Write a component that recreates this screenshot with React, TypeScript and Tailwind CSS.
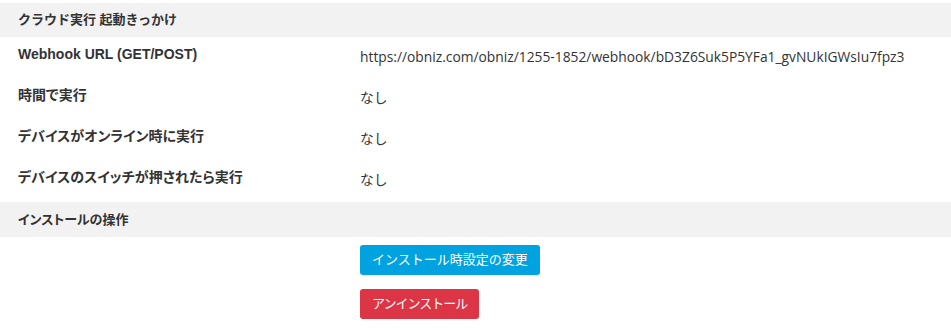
export default function App() {
  const rows = [
    { label: 'Webhook URL (GET/POST)', value: 'https://obniz.com/obniz/1255-1852/webhook/bD3Z6Suk5P5YFa1_gvNUkIGWsIu7fpz3' },
    { label: '時間で実行', value: 'なし' },
    { label: 'デバイスがオンライン時に実行', value: 'なし' },
    { label: 'デバイスのスイッチが押されたら実行', value: 'なし' },
  ];
  const sans = "font-['Liberation_Sans','Noto_Sans_CJK_JP',sans-serif]";
  const val = "font-['Open_Sans','Noto_Sans_CJK_JP',sans-serif]";

  return (
    <div className={`w-[951px] h-[330px] bg-white pt-[3px] text-[#333] ${sans}`}>
      <div className="h-[34px] bg-[#f2f2f2] px-[18px] flex items-center text-[13px] font-bold">
        クラウド実行 起動きっかけ
      </div>
      <div className="pt-px">
        {rows.map((r) => (
          <div key={r.label} className="h-[41px] flex">
            <div className="w-[360px] pl-[18px] pt-[6px] text-[14px] font-bold leading-[20px] [font-feature-settings:'palt']">
              {r.label}
            </div>
            <div className={`pt-[9px] text-[13.8px] leading-[20px] ${val}`}>{r.value}</div>
          </div>
        ))}
      </div>
      <div className="h-[35px] bg-[#f2f2f2] px-[18px] flex items-center text-[13px] font-bold [font-feature-settings:'palt']">
        インストールの操作
      </div>
      <div className="pl-[360px] pt-[8px] flex flex-col items-start gap-[14px]">
        <button className="h-[30px] px-[12px] rounded-[3px] bg-[#00a3e0] text-white text-[13px]">
          インストール時設定の変更
        </button>
        <button className="h-[30px] px-[12px] rounded-[3px] bg-[#dc3545] text-white text-[13px] tracking-[-1px]">
          アンインストール
        </button>
      </div>
    </div>
  );
}
